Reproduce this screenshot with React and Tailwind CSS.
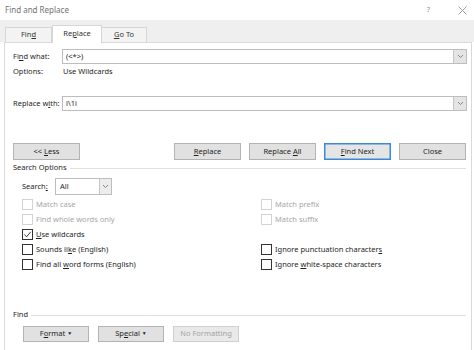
import React from "react";

function U({ children }) {
  return <span className="underline underline-offset-[1px] decoration-[0.5px]">{children}</span>;
}

function Chevron() {
  return (
    <svg width="7" height="5" viewBox="0 0 7 5" className="block">
      <polyline points="1,1 3.5,3.5 6,1" fill="none" stroke="#7a7a7a" strokeWidth="0.9" />
    </svg>
  );
}

function Combo({ text, className }) {
  return (
    <div className={"h-[15px] border border-[#bdbdbd] bg-white flex items-stretch " + className}>
      <div className="flex-1 flex items-center pl-[3px] text-[#1e1e1e]">
        <span>{text}</span>
      </div>
      <div className="w-[13px] border-l border-[#c6c6c6] bg-[#e4e4e4] flex items-center justify-center">
        <Chevron />
      </div>
    </div>
  );
}

function Btn({ children, className = "", disabled = false, primary = false }) {
  return (
    <div
      className={
        "h-[17px] flex items-center justify-center border " +
        (primary
          ? "border-[#3c8ad6] bg-[#e5e5e5] ring-[0.5px] ring-[#3c8ad6] ring-inset "
          : disabled
          ? "border-[#cfcfcf] bg-[#e9e9e9] text-[#a3a3a3] "
          : "border-[#b3b3b3] bg-[#e1e1e1] ") +
        className
      }
    >
      <span className="whitespace-pre">{children}</span>
    </div>
  );
}

function Check({ label, disabled = false, checked = false }) {
  return (
    <div className="h-[15px] flex items-center">
      <div
        className={
          "w-[11px] h-[11px] border bg-white flex items-center justify-center " +
          (disabled ? "border-[#d2d2d2]" : "border-[#333333]")
        }
      >
        {checked && (
          <svg width="9" height="9" viewBox="0 0 9 9" className="block">
            <polyline points="1.5,4.5 3.5,6.8 7.8,1.8" fill="none" stroke="#222" strokeWidth="0.9" />
          </svg>
        )}
      </div>
      <span className={"ml-[3px] whitespace-pre " + (disabled ? "text-[#a6a6a6]" : "text-[#1e1e1e]")}>{label}</span>
    </div>
  );
}

export default function App() {
  return (
    <div className="w-[474px] h-[350px] bg-white overflow-hidden flex flex-col font-['Noto_Sans',sans-serif] text-[7.5px] leading-none text-[#1e1e1e]">
      {/* title bar */}
      <div className="h-[20px] flex items-center pl-[5px] shrink-0">
        <span className="text-[8px] text-[#727272]">Find and Replace</span>
        <span className="ml-auto text-[7.5px] text-[#8a8a8a]">?</span>
        <svg width="9" height="9" viewBox="0 0 9 9" className="block ml-[28px] mr-[7px]">
          <line x1="0.5" y1="0.5" x2="8.5" y2="8.5" stroke="#8a8a8a" strokeWidth="0.8" />
          <line x1="8.5" y1="0.5" x2="0.5" y2="8.5" stroke="#8a8a8a" strokeWidth="0.8" />
        </svg>
      </div>
      {/* tab band */}
      <div className="h-[22px] bg-[#efefef] flex items-end pl-[5px] shrink-0 relative z-10">
        <div className="w-[47px] h-[15px] border border-b-0 border-[#d6d6d6] bg-[#f3f3f3] flex items-center justify-center text-[#333]">
          <span>Fin<U>d</U></span>
        </div>
        <div className="w-[50px] h-[18px] border border-b-0 border-x-[#d6d6d6] border-t-[#d6d6d6] bg-white flex items-center justify-center -mb-px pb-[2px] text-[#333]">
          <span>Re<U>p</U>lace</span>
        </div>
        <div className="w-[45px] h-[15px] border border-b-0 border-l-0 border-[#d6d6d6] bg-[#f3f3f3] flex items-center justify-center text-[#333]">
          <span className="whitespace-pre"><U>G</U>o To</span>
        </div>
      </div>
      {/* panel */}
      <div className="flex-1 ml-[4px] mr-[2px] border-x border-t border-[#d9d9d9] bg-white flex flex-col">
        <div className="mt-[6px] pl-[8px] pr-[4px] flex items-center">
          <div className="w-[49px]">
            <span className="whitespace-pre">Fi<U>n</U>d what:</span>
          </div>
          <Combo text="(<*>)" className="flex-1" />
        </div>
        <div className="mt-[2px] h-[12px] pl-[8px] flex items-center">
          <div className="w-[50px]">Options:</div>
          <div>Use Wildcards</div>
        </div>
        <div className="mt-[18px] pl-[8px] pr-[4px] flex items-center">
          <div className="w-[49px]">
            <span className="whitespace-pre">Replace w<U>i</U>th:</span>
          </div>
          <Combo text={"l\\1i"} className="flex-1" />
        </div>
        <div className="mt-[32px] pl-[8px] pr-[5px] flex items-center">
          <Btn className="w-[67px]">&lt;&lt; <U>L</U>ess</Btn>
          <div className="ml-auto flex gap-[8px]">
            <Btn className="w-[67px]"><U>R</U>eplace</Btn>
            <Btn className="w-[67px]">Replace <U>A</U>ll</Btn>
            <Btn className="w-[67px]" primary><U>F</U>ind Next</Btn>
            <Btn className="w-[67px]">Close</Btn>
          </div>
        </div>
        <div className="mt-[2px] h-[12px] pl-[8px] pr-[5px] flex items-center">
          <span>Search Options</span>
          <div className="flex-1 h-px bg-[#e0e0e0] ml-[3px]" />
        </div>
        <div className="mt-[4px] pl-[17px] flex items-center">
          <div className="w-[33px]">
            <span>Search<U>:</U></span>
          </div>
          <div className="w-[57px] h-[17px] border border-[#bdbdbd] flex items-stretch">
            <div className="flex-1 flex items-center pl-[4px]">All</div>
            <div className="w-[12px] border-l border-[#c6c6c6] bg-[#ececec] flex items-center justify-center">
              <Chevron />
            </div>
          </div>
        </div>
        <div className="mt-[2px] pl-[17px] grid grid-cols-[239px_1fr]">
          <Check label="Match case" disabled />
          <Check label="Match prefix" disabled />
          <Check label="Find whole words only" disabled />
          <Check label="Match suffix" disabled />
          <Check checked label={<><U>U</U>se wildcards</>} />
          <div className="h-[15px]" />
          <Check label={<>Sounds li<U>k</U>e (English)</>} />
          <Check label={<>Ignore punctuation character<U>s</U></>} />
          <Check label={<>Find all <U>w</U>ord forms (English)</>} />
          <Check label={<>Ignore <U>w</U>hite-space characters</>} />
        </div>
        <div className="mt-[37px] h-[12px] pl-[8px] pr-[5px] flex items-center">
          <span>Find</span>
          <div className="flex-1 h-px bg-[#e0e0e0] ml-[3px]" />
        </div>
        <div className="mt-[5px] pl-[18px] flex gap-[9px]">
          <Btn className="w-[66px] !h-[16px]">
            F<U>o</U>rmat <span className="text-[5px] align-[1px]">▼</span>
          </Btn>
          <Btn className="w-[66px] !h-[16px]">
            Sp<U>e</U>cial <span className="text-[5px] align-[1px]">▼</span>
          </Btn>
          <Btn className="w-[66px] !h-[16px]" disabled>No Formatting</Btn>
        </div>
      </div>
    </div>
  );
}
